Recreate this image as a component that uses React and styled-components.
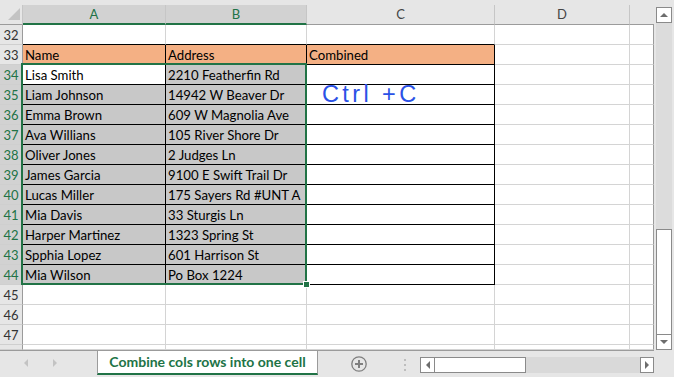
import React from 'react';
import styled, { createGlobalStyle } from 'styled-components';

const GREEN = '#217346';
const GRID = '#d4d4d4';
const EDGE = '#9b9b9b';
const FONT = `'Lato', 'Liberation Sans', Arial, sans-serif`;

const GlobalStyle = createGlobalStyle`
  html, body {
    margin: 0;
    padding: 0;
    background: #e6e6e6;
    overflow: hidden;
  }
`;

const COLUMNS = [
  { key: 'A', sel: true },
  { key: 'B', sel: true },
  { key: 'C' },
  { key: 'D' },
  { key: '', last: true },
];
const TEMPLATE = '23px 143px 141px 188px 135px 24px';

const PEOPLE = [
  ['Lisa Smith', '2210 Featherfin Rd'],
  ['Liam Johnson', '14942 W Beaver Dr'],
  ['Emma Brown', '609 W Magnolia Ave'],
  ['Ava Willians', '105 River Shore Dr'],
  ['Oliver Jones', '2 Judges Ln'],
  ['James Garcia', '9100 E Swift Trail Dr'],
  ['Lucas Miller', '175 Sayers Rd #UNT A'],
  ['Mia Davis', '33 Sturgis Ln'],
  ['Harper Martinez', '1323 Spring St'],
  ['Spphia Lopez', '601 Harrison St'],
  ['Mia Wilson', 'Po Box 1224'],
];

// row number -> cell values
const DATA = { 33: ['Name', 'Address', 'Combined'] };
PEOPLE.forEach((p, i) => {
  DATA[34 + i] = [p[0], p[1], ''];
});

const ROWS = [];
for (let r = 32; r <= 48; r++) ROWS.push(r);

const inTable = (r, c) => r >= 33 && r <= 44 && c >= 0 && c <= 2;
const isSelected = (r, c) => r >= 34 && r <= 44 && c <= 1;

const Window = styled.div`
  width: 674px;
  height: 377px;
  display: flex;
  flex-direction: column;
  background: #e6e6e6;
  font-family: ${FONT};
`;

const Main = styled.div`
  display: flex;
  height: 351px;
`;

const Sheet = styled.div`
  position: relative;
  width: 654px;
  height: 351px;
  box-sizing: border-box;
  border-bottom: 1px solid ${EDGE};
  background: #fff;
  overflow: hidden;
`;

const HeaderRow = styled.div`
  display: grid;
  grid-template-columns: ${TEMPLATE};
  padding-top: 5px;
  background: #e6e6e6;
`;

const HeadCell = styled.div`
  box-sizing: border-box;
  height: 20px;
  background: ${p => (p.$sel ? '#d2d2d2' : '#e6e6e6')};
  border-right: ${p => (p.$last ? 'none' : '1px solid #c6c6c6')};
  border-bottom: ${p => (p.$sel ? `2px solid ${GREEN}` : `1px solid ${EDGE}`)};
  color: ${p => (p.$sel ? GREEN : '#444')};
  font-size: 13px;
  line-height: 18px;
  text-align: center;
`;

const Corner = styled(HeadCell)`
  position: relative;
  svg {
    position: absolute;
    left: 0;
    top: 0;
  }
`;

const Body = styled.div`
  display: grid;
  grid-template-columns: ${TEMPLATE};
  grid-template-rows: repeat(16, 20px) 5px;
`;

const RowHead = styled.div`
  box-sizing: border-box;
  background: ${p => (p.$sel ? '#d2d2d2' : '#e6e6e6')};
  color: ${p => (p.$sel ? GREEN : '#333')};
  border-right: 1px solid ${EDGE};
  border-bottom: 1px solid #cfcfcf;
  font-size: 13px;
  line-height: 20px;
  text-align: center;
  overflow: hidden;
`;

const Cell = styled.div`
  box-sizing: border-box;
  background: ${p => p.$bg};
  border-right: 1px solid ${p => p.$right};
  border-bottom: 1px solid ${p => p.$bottom};
  padding-left: 2px;
  font-size: 13.2px;
  line-height: 21px;
  color: #000;
  white-space: nowrap;
  overflow: ${p => (p.$spill ? 'visible' : 'hidden')};
`;

const Note = styled.span`
  display: block;
  margin-left: 13px;
  font-family: 'Liberation Sans', Arial, sans-serif;
  font-size: 23.5px;
  line-height: 19px;
  letter-spacing: 3.4px;
  color: #2b52e6;
`;

const Selection = styled.div`
  position: absolute;
  left: 21px;
  top: 63px;
  width: 286px;
  height: 222px;
  box-sizing: border-box;
  border: 2px solid ${GREEN};
  pointer-events: none;
`;

const FillHandle = styled.div`
  position: absolute;
  left: 303px;
  top: 281px;
  width: 7px;
  height: 7px;
  box-sizing: border-box;
  border: 1px solid #fff;
  background: ${GREEN};
`;

const VScroll = styled.div`
  width: 20px;
  height: 351px;
  box-sizing: border-box;
  padding: 7px 0 1px 2px;
  display: flex;
  flex-direction: column;
`;

const ScrollButton = styled.div`
  box-sizing: border-box;
  width: ${p => p.$w || 16}px;
  height: 16px;
  flex: none;
  background: #fff;
  border: 1px solid #8a8a8a;
  display: flex;
  align-items: center;
  justify-content: center;
`;

const VTrack = styled.div`
  flex: 1;
  width: 16px;
  background: #dcdcdc;
  display: flex;
  flex-direction: column;
  justify-content: flex-end;
`;

const VThumb = styled.div`
  box-sizing: border-box;
  height: 105px;
  background: #fff;
  border: 1px solid #8a8a8a;
  border-bottom: none;
`;

const BottomBar = styled.div`
  height: 26px;
  display: flex;
  align-items: flex-start;
`;

const NavArea = styled.div`
  width: 97px;
  height: 24px;
  display: flex;
  align-items: center;
  gap: 25px;
  padding-left: 24px;
  box-sizing: border-box;
`;

const SheetTab = styled.div`
  box-sizing: border-box;
  width: 221px;
  height: 24px;
  background: #fff;
  border-left: 1px solid ${EDGE};
  border-right: 1px solid ${EDGE};
  border-bottom: 2px solid ${GREEN};
  color: ${GREEN};
  font-weight: 700;
  font-size: 14px;
  line-height: 22px;
  text-align: center;
  white-space: nowrap;
`;

const AddSheet = styled.svg`
  margin: 5px 0 0 33px;
  flex: none;
`;

const Dots = styled.svg`
  margin: 7px 0 0 37px;
  flex: none;
`;

const HScroll = styled.div`
  width: 234px;
  height: 16px;
  margin: 6px 0 0 14px;
  display: flex;
`;

const HThumb = styled.div`
  box-sizing: border-box;
  width: 91px;
  height: 16px;
  background: #fff;
  border: 1px solid #8a8a8a;
  border-left: none;
`;

const HTrack = styled.div`
  flex: 1;
  height: 16px;
  background: #d9d9d9;
`;

function Arrow({ dir, color = '#6d6d6d', size = 4 }) {
  const pts = {
    up: `0,${size} ${size},0 ${size * 2},${size}`,
    down: `0,0 ${size * 2},0 ${size},${size}`,
    left: `${size},0 ${size},${size * 2} 0,${size}`,
    right: `0,0 0,${size * 2} ${size},${size}`,
  }[dir];
  const vertical = dir === 'up' || dir === 'down';
  return (
    <svg
      width={vertical ? size * 2 : size}
      height={vertical ? size : size * 2}
      style={{ display: 'block' }}
    >
      <polygon points={pts} fill={color} />
    </svg>
  );
}

function cellBg(r, c) {
  if (r === 33 && c <= 2) return '#f4b084';
  if (r === 34 && c === 0) return '#fff';
  if (isSelected(r, c)) return '#c8c8c8';
  return '#fff';
}

function Grid() {
  return (
    <Body>
      {ROWS.map(r => {
        const rowSel = r >= 34 && r <= 44;
        const values = DATA[r] || [];
        return (
          <React.Fragment key={r}>
            <RowHead $sel={rowSel}>{r <= 47 ? r : ''}</RowHead>
            {COLUMNS.map((col, c) => {
              const right = col.last
                ? EDGE
                : inTable(r, c) || inTable(r, c + 1)
                ? '#000'
                : GRID;
              const bottom = inTable(r, c) || inTable(r + 1, c) ? '#000' : GRID;
              const note = r === 35 && c === 2;
              return (
                <Cell
                  key={c}
                  $bg={cellBg(r, c)}
                  $right={right}
                  $bottom={bottom}
                  $spill={note}
                >
                  {note ? <Note>Ctrl +C</Note> : values[c]}
                </Cell>
              );
            })}
          </React.Fragment>
        );
      })}
    </Body>
  );
}

export default function App() {
  return (
    <Window>
      <GlobalStyle />
      <Main>
        <Sheet>
          <HeaderRow>
            <Corner>
              <svg width="22" height="19">
                <polygon points="20,3 20,15 8,15" fill="#c3c3c3" />
              </svg>
            </Corner>
            {COLUMNS.map(col => (
              <HeadCell key={col.key || 'E'} $sel={col.sel} $last={col.last}>
                {col.key}
              </HeadCell>
            ))}
          </HeaderRow>
          <Grid />
          <Selection />
          <FillHandle />
        </Sheet>
        <VScroll>
          <ScrollButton>
            <Arrow dir="up" />
          </ScrollButton>
          <VTrack>
            <VThumb />
          </VTrack>
          <ScrollButton>
            <Arrow dir="down" />
          </ScrollButton>
        </VScroll>
      </Main>
      <BottomBar>
        <NavArea>
          <Arrow dir="left" color="#c3c3c3" />
          <Arrow dir="right" color="#c3c3c3" />
        </NavArea>
        <SheetTab>Combine cols rows into one cell</SheetTab>
        <AddSheet width="16" height="16" viewBox="0 0 16 16">
          <circle cx="8" cy="8" r="7.2" fill="none" stroke="#7f7f7f" strokeWidth="1.3" />
          <path d="M8 4v8M4 8h8" stroke="#7f7f7f" strokeWidth="2" />
        </AddSheet>
        <Dots width="2" height="14">
          <rect x="0" y="1" width="2" height="2" fill="#bdbdbd" />
          <rect x="0" y="6" width="2" height="2" fill="#bdbdbd" />
          <rect x="0" y="11" width="2" height="2" fill="#bdbdbd" />
        </Dots>
        <HScroll>
          <ScrollButton $w={15}>
            <Arrow dir="left" />
          </ScrollButton>
          <HThumb />
          <HTrack />
          <ScrollButton $w={14}>
            <Arrow dir="right" />
          </ScrollButton>
        </HScroll>
      </BottomBar>
    </Window>
  );
}
